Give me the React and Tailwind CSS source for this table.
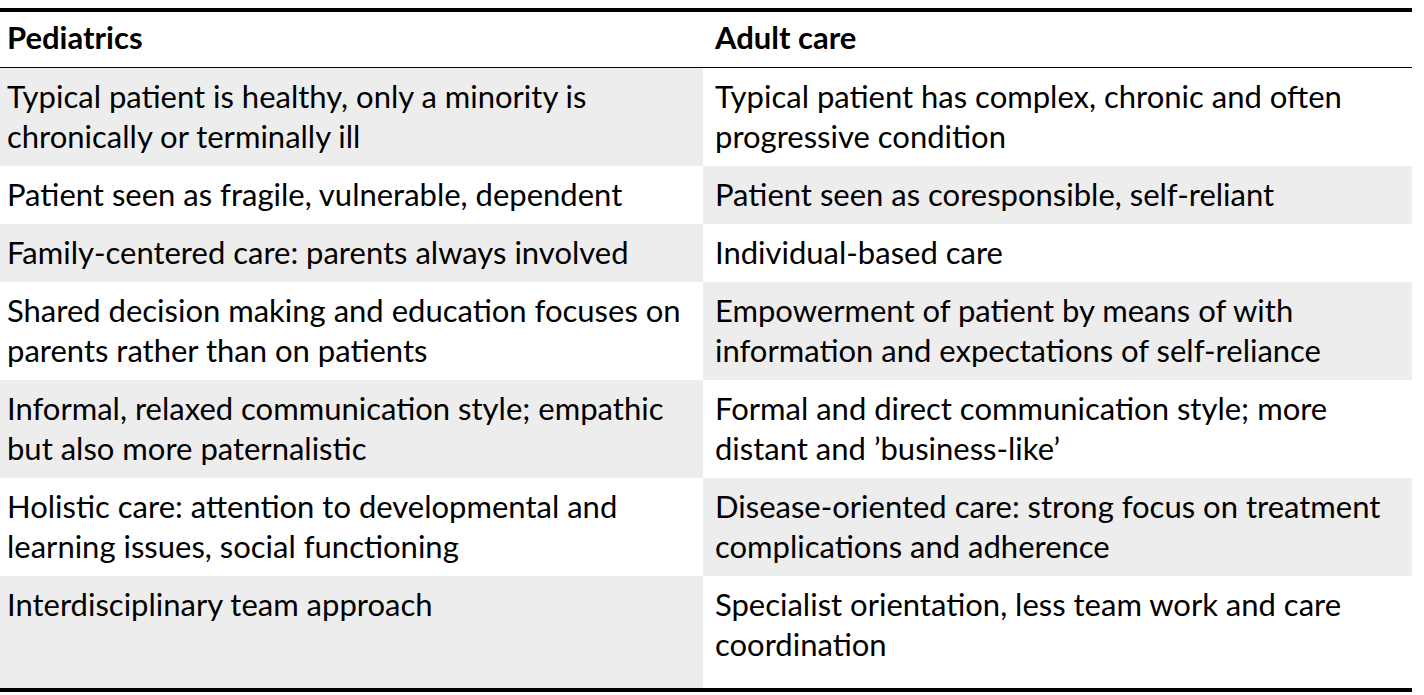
const rows = [
  {
    left: ['Typical patient is healthy, only a minority is', 'chronically or terminally ill'],
    right: ['Typical patient has complex, chronic and often', 'progressive condition'],
  },
  {
    left: ['Patient seen as fragile, vulnerable, dependent'],
    right: ['Patient seen as coresponsible, self-reliant'],
  },
  {
    left: ['Family-centered care: parents always involved'],
    right: ['Individual-based care'],
  },
  {
    left: ['Shared decision making and education focuses on', 'parents rather than on patients'],
    right: ['Empowerment of patient by means of with', 'information and expectations of self-reliance'],
  },
  {
    left: ['Informal, relaxed communication style; empathic', 'but also more paternalistic'],
    right: ['Formal and direct communication style; more', 'distant and ’business-like’'],
  },
  {
    left: ['Holistic care: attention to developmental and', 'learning issues, social functioning'],
    right: ['Disease-oriented care: strong focus on treatment', 'complications and adherence'],
  },
  {
    left: ['Interdisciplinary team approach'],
    right: ['Specialist orientation, less team work and care', 'coordination'],
  },
];

function Lines({ lines }) {
  return lines.map((line, i) => (
    <span key={i} className="block whitespace-nowrap">
      {line}
    </span>
  ));
}

export default function App() {
  return (
    <div
      className="min-h-screen bg-white pt-[8px] text-black"
      style={{ fontFamily: 'Lato, "Open Sans", sans-serif' }}
    >
      <div className="w-[1412px] border-t-[4px] border-b-[4px] border-black text-[31px] leading-[40px]">
        <div className="grid grid-cols-[703px_709px] border-b border-black font-bold">
          <div className="pl-[7px] pt-[5px] pb-[10px]">Pediatrics</div>
          <div className="pl-[12px] pt-[5px] pb-[10px]">Adult care</div>
        </div>
        {rows.map((row, i) => {
          const last = i === rows.length - 1;
          const pad = last ? 'pt-[8px] pb-[24px]' : 'pt-[8px] pb-[10px]';
          return (
            <div key={i} className="grid grid-cols-[703px_709px]">
              <div className={`pl-[7px] ${pad} ${i % 2 === 0 ? 'bg-[#ededed]' : 'bg-white'}`}>
                <Lines lines={row.left} />
              </div>
              <div className={`pl-[12px] ${pad} ${i % 2 === 1 ? 'bg-[#ededed]' : 'bg-white'}`}>
                <Lines lines={row.right} />
              </div>
            </div>
          );
        })}
      </div>
    </div>
  );
}
